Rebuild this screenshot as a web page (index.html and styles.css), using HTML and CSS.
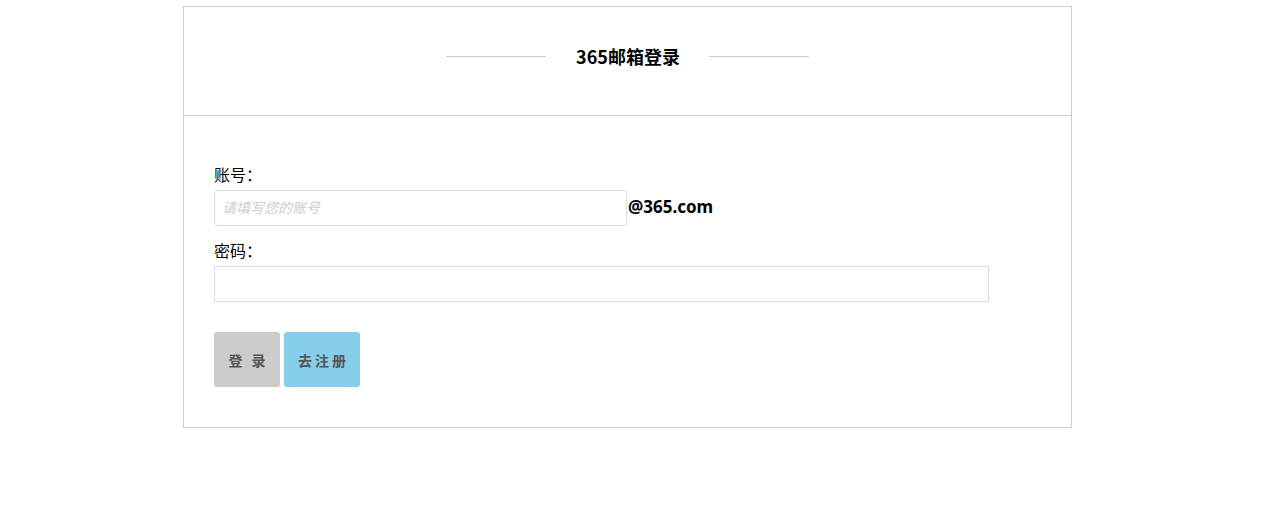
FILE: index.html
```html
<!DOCTYPE html>
<html lang="zh-CN">
<head>
<meta charset="utf-8">
<title>365邮箱登录</title>
<link rel="stylesheet" href="styles.css">
</head>
<body>
<div class="card">
  <div class="card-header">
    <span class="rule"></span>
    <h1 class="title">365邮箱登录</h1>
    <span class="rule"></span>
  </div>
  <form class="card-body">
    <div class="field">
      <label class="label" for="acc">账号：</label>
      <div class="row">
        <input id="acc" class="input input-account" type="text" placeholder="请填写您的账号">
        <span class="suffix">@365.com</span>
      </div>
    </div>
    <div class="field">
      <label class="label" for="pwd">密码：</label>
      <div class="row">
        <input id="pwd" class="input input-password" type="password">
      </div>
    </div>
    <div class="actions">
      <button type="button" class="btn btn-login">登 录</button>
      <button type="button" class="btn btn-register">去注册</button>
    </div>
  </form>
</div>
</body>
</html>
```

FILE: styles.css
```css
* { box-sizing: border-box; }

body {
  margin: 0;
  background: #fff;
  color: #000;
  font-family: "Noto Sans", "Noto Sans CJK SC", sans-serif;
}

.card {
  width: 889px;
  margin: 6px 0 0 183px;
  border: 1px solid #ccc;
}

.card-header {
  height: 109px;
  border-bottom: 1px solid #ccc;
  display: flex;
  align-items: center;
  justify-content: center;
  padding: 0 0 11px 0;
}

.rule {
  width: 100px;
  height: 1px;
  background: #ccc;
  margin-top: 1px;
}

.title {
  margin: 0 29px 0 30px;
  font-family: "Noto Sans CJK SC", sans-serif;
  font-size: 18px;
  font-weight: bold;
  line-height: 22px;
}

.card-body {
  margin: 0;
  padding: 47px 30px 40px 30px;
}

.field {
  margin-bottom: 13px;
}

.label {
  display: block;
  font-family: "Noto Sans CJK SC", sans-serif;
  font-size: 16px;
  line-height: 22px;
  margin-bottom: 5px;
}

.row {
  display: flex;
  align-items: center;
}

.input {
  height: 36px;
  border: 1px solid #ddd;
  padding: 0 7px 2px 7px;
  font-size: 14px;
  font-family: "Noto Sans CJK SC", sans-serif;
  outline: none;
  background: #fff;
}

.input::placeholder {
  color: #ccc;
  font-style: italic;
}

.input-account {
  width: 413px;
  border-radius: 4px;
}

.input-password {
  width: 775px;
  border-radius: 0;
}

.suffix {
  margin: 0 0 4px 1px;
  font-size: 17px;
  font-weight: bold;
}

.actions {
  display: flex;
  gap: 4px;
  margin-top: 30px;
}

.btn {
  height: 55px;
  border: none;
  border-radius: 3px;
  font-family: "Noto Sans CJK SC", sans-serif;
  font-size: 14px;
  font-weight: bold;
  color: #555;
  letter-spacing: 3px;
  padding: 0 0 0 3px;
  cursor: pointer;
}

.btn-login {
  width: 66px;
  background: #ccc;
}

.btn-register {
  width: 76px;
  background: #87ceeb;
}
```
